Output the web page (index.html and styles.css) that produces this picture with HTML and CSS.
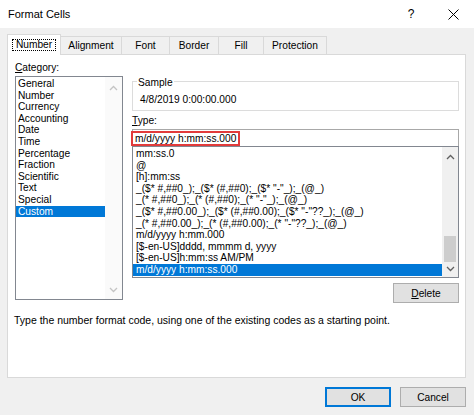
FILE: index.html
```html
<!DOCTYPE html>
<html lang="en">
<head>
<meta charset="utf-8">
<title>Format Cells</title>
<link rel="stylesheet" href="styles.css">
</head>
<body>
<div class="titlebar">
  <span class="title">Format Cells</span>
  <span class="tb-btn tb-help">?</span>
  <span class="tb-btn tb-close"><svg width="11" height="11" viewBox="0 0 11 11"><path d="M0.5 0.5 L10.5 10.5 M10.5 0.5 L0.5 10.5" stroke="#000" stroke-width="1" fill="none"/></svg></span>
</div>
<div class="tabs">
  <div class="tab tab-number active"><span class="focus">Number</span></div>
  <div class="tab tab-align">Alignment</div>
  <div class="tab tab-font">Font</div>
  <div class="tab tab-border">Border</div>
  <div class="tab tab-fill">Fill</div>
  <div class="tab tab-prot">Protection</div>
</div>
<div class="panel">
  <div class="cols">
    <div class="left">
      <div class="label"><u>C</u>ategory:</div>
      <div class="listbox cat">
        <div class="items">
          <div class="item">General</div>
          <div class="item">Number</div>
          <div class="item">Currency</div>
          <div class="item">Accounting</div>
          <div class="item">Date</div>
          <div class="item">Time</div>
          <div class="item">Percentage</div>
          <div class="item">Fraction</div>
          <div class="item">Scientific</div>
          <div class="item">Text</div>
          <div class="item">Special</div>
          <div class="item sel">Custom</div>
        </div>
        <div class="vscroll disabled">
          <svg class="chev" width="9" height="6" viewBox="0 0 9 6"><polyline points="1,5 4.5,1.5 8,5" fill="none" stroke-width="1.3"/></svg>
          <svg class="chev" width="9" height="6" viewBox="0 0 9 6"><polyline points="1,1 4.5,4.5 8,1" fill="none" stroke-width="1.3"/></svg>
        </div>
      </div>
    </div>
    <div class="right">
      <fieldset class="sample">
        <legend>Sample</legend>
        <div class="sample-val">4/8/2019 0:00:00.000</div>
      </fieldset>
      <div class="label type-label"><u>T</u>ype:</div>
      <div class="typein"><span class="hl">m/d/yyyy h:mm:ss.000</span></div>
      <div class="listbox types">
        <div class="items">
          <div class="item">mm:ss.0</div>
          <div class="item">@</div>
          <div class="item">[h]:mm:ss</div>
          <div class="item">_($* #,##0_);_($* (#,##0);_($* "-"_);_(@_)</div>
          <div class="item">_(* #,##0_);_(* (#,##0);_(* "-"_);_(@_)</div>
          <div class="item">_($* #,##0.00_);_($* (#,##0.00);_($* "-"??_);_(@_)</div>
          <div class="item">_(* #,##0.00_);_(* (#,##0.00);_(* "-"??_);_(@_)</div>
          <div class="item">m/d/yyyy h:mm.000</div>
          <div class="item">[$-en-US]dddd, mmmm d, yyyy</div>
          <div class="item">[$-en-US]h:mm:ss AM/PM</div>
          <div class="item sel">m/d/yyyy h:mm:ss.000</div>
        </div>
        <div class="vscroll">
          <svg class="chev" width="9" height="6" viewBox="0 0 9 6"><polyline points="1,5 4.5,1.5 8,5" fill="none" stroke-width="1.3"/></svg>
          <div class="track"><div class="thumb"></div></div>
          <svg class="chev" width="9" height="6" viewBox="0 0 9 6"><polyline points="1,1 4.5,4.5 8,1" fill="none" stroke-width="1.3"/></svg>
        </div>
      </div>
      <div class="btnrow"><button class="btn delete"><u>D</u>elete</button></div>
    </div>
  </div>
  <p class="desc">Type the number format code, using one of the existing codes as a starting point.</p>
</div>
<div class="footer">
  <button class="btn default">OK</button>
  <button class="btn">Cancel</button>
</div>
</body>
</html>
```

FILE: styles.css
```css
* { box-sizing: border-box; }
html, body { margin: 0; }
body {
  width: 474px;
  height: 415px;
  overflow: hidden;
  background: #f0f0f0;
  font-family: "Liberation Sans", Arial, sans-serif;
  font-size: 10.2px;
  color: #000;
}
u { text-decoration: underline; text-underline-offset: 1px; }

.titlebar {
  height: 28px;
  background: #fff;
  display: flex;
  align-items: center;
  padding-left: 8px;
}
.title { flex: 1; font-size: 11px; }
.tb-btn {
  width: 42px;
  height: 28px;
  display: flex;
  align-items: center;
  justify-content: center;
}
.tb-help { font-size: 12px; }

.tabs {
  display: flex;
  align-items: flex-end;
  height: 20px;
  margin-top: 6px;
  padding-left: 7px;
}
.tab {
  height: 18px;
  border: 1px solid #d9d9d9;
  border-bottom: none;
  background: #f0f0f0;
  display: flex;
  align-items: center;
  justify-content: center;
  margin-left: -1px;
}
.tab.active {
  height: 21px;
  margin-bottom: -1px;
  background: #fff;
  position: relative;
  z-index: 1;
  margin-left: 0;
}
.tab-number { width: 54px; }
.tab-align { width: 62px; }
.tab-font { width: 49px; }
.tab-border { width: 50px; }
.tab-fill { width: 46px; }
.tab-prot { width: 64px; }
.focus {
  border: 1px dotted #000;
  padding: 0 3px;
  line-height: 10px;
  height: 12px;
  display: inline-flex;
  align-items: center;
}

.panel {
  margin: 0 8px 0 7px;
  height: 324px;
  border: 1px solid #d9d9d9;
  background: #fff;
  padding: 7px 6px 0 7px;
}
.cols { display: flex; gap: 9px; }
.left { width: 108px; }
.right { width: 327px; }
.label { height: 12px; line-height: 12px; }

.listbox {
  border: 1px solid #828790;
  display: flex;
  background: #fff;
}
.listbox .items { flex: 1; padding-top: 1px; }
.item { line-height: 11.6px; height: 11.6px; white-space: nowrap; }
.item.sel { background: #0078d7; color: #fff; }
.cat { height: 224px; margin-top: 2px; }
.cat .item { padding-left: 2px; }
.types .item { padding-left: 3px; }
.vscroll {
  width: 16px;
  background: #f0f0f0;
  display: flex;
  flex-direction: column;
  align-items: center;
  padding: 8px 0 6px;
}
.vscroll.disabled { width: 17px; background: #fafafa; justify-content: space-between; }
.chev { stroke: #606060; flex: none; }
.disabled .chev { stroke: #c4c4c4; }
.track { flex: 1; width: 100%; display: flex; flex-direction: column; justify-content: flex-end; padding: 0 2px 4px; }
.thumb { height: 26px; background: #cdcdcd; }

.sample {
  margin: 11px 0 0;
  height: 38px;
  border: 1px solid #dcdcdc;
  padding: 5px 7px 3px;
}
.sample legend {
  margin-left: -3px;
  padding: 4px 1px 0;
  line-height: 12px;
}
.sample-val { line-height: 12px; }
.type-label { margin-top: 4px; }
.typein {
  margin-top: 2px;
  height: 17px;
  border: 1px solid #a8a8a8;
  border-bottom: none;
  display: flex;
  align-items: center;
  padding-left: 0;
}
.hl {
  display: inline-block;
  line-height: 11px;
  padding: 0 2px;
  outline: 2px solid #e23b3b;
}
.types { height: 132px; }
.types .vscroll { padding: 7px 0 5px; }

.btnrow { display: flex; justify-content: flex-end; margin-top: 5px; }
.btn {
  font: inherit;
  color: #000;
  width: 66px;
  height: 20px;
  background: #e1e1e1;
  border: 1px solid #adadad;
  padding: 0;
  margin: 0;
}
.desc { margin: 11px 0 0 -1px; line-height: 12px; font-size: 10.5px; }

.footer {
  display: flex;
  justify-content: flex-end;
  gap: 9px;
  padding: 9px 8px 0 0;
}
.btn.default { border: 2px solid #0078d7; }
```
